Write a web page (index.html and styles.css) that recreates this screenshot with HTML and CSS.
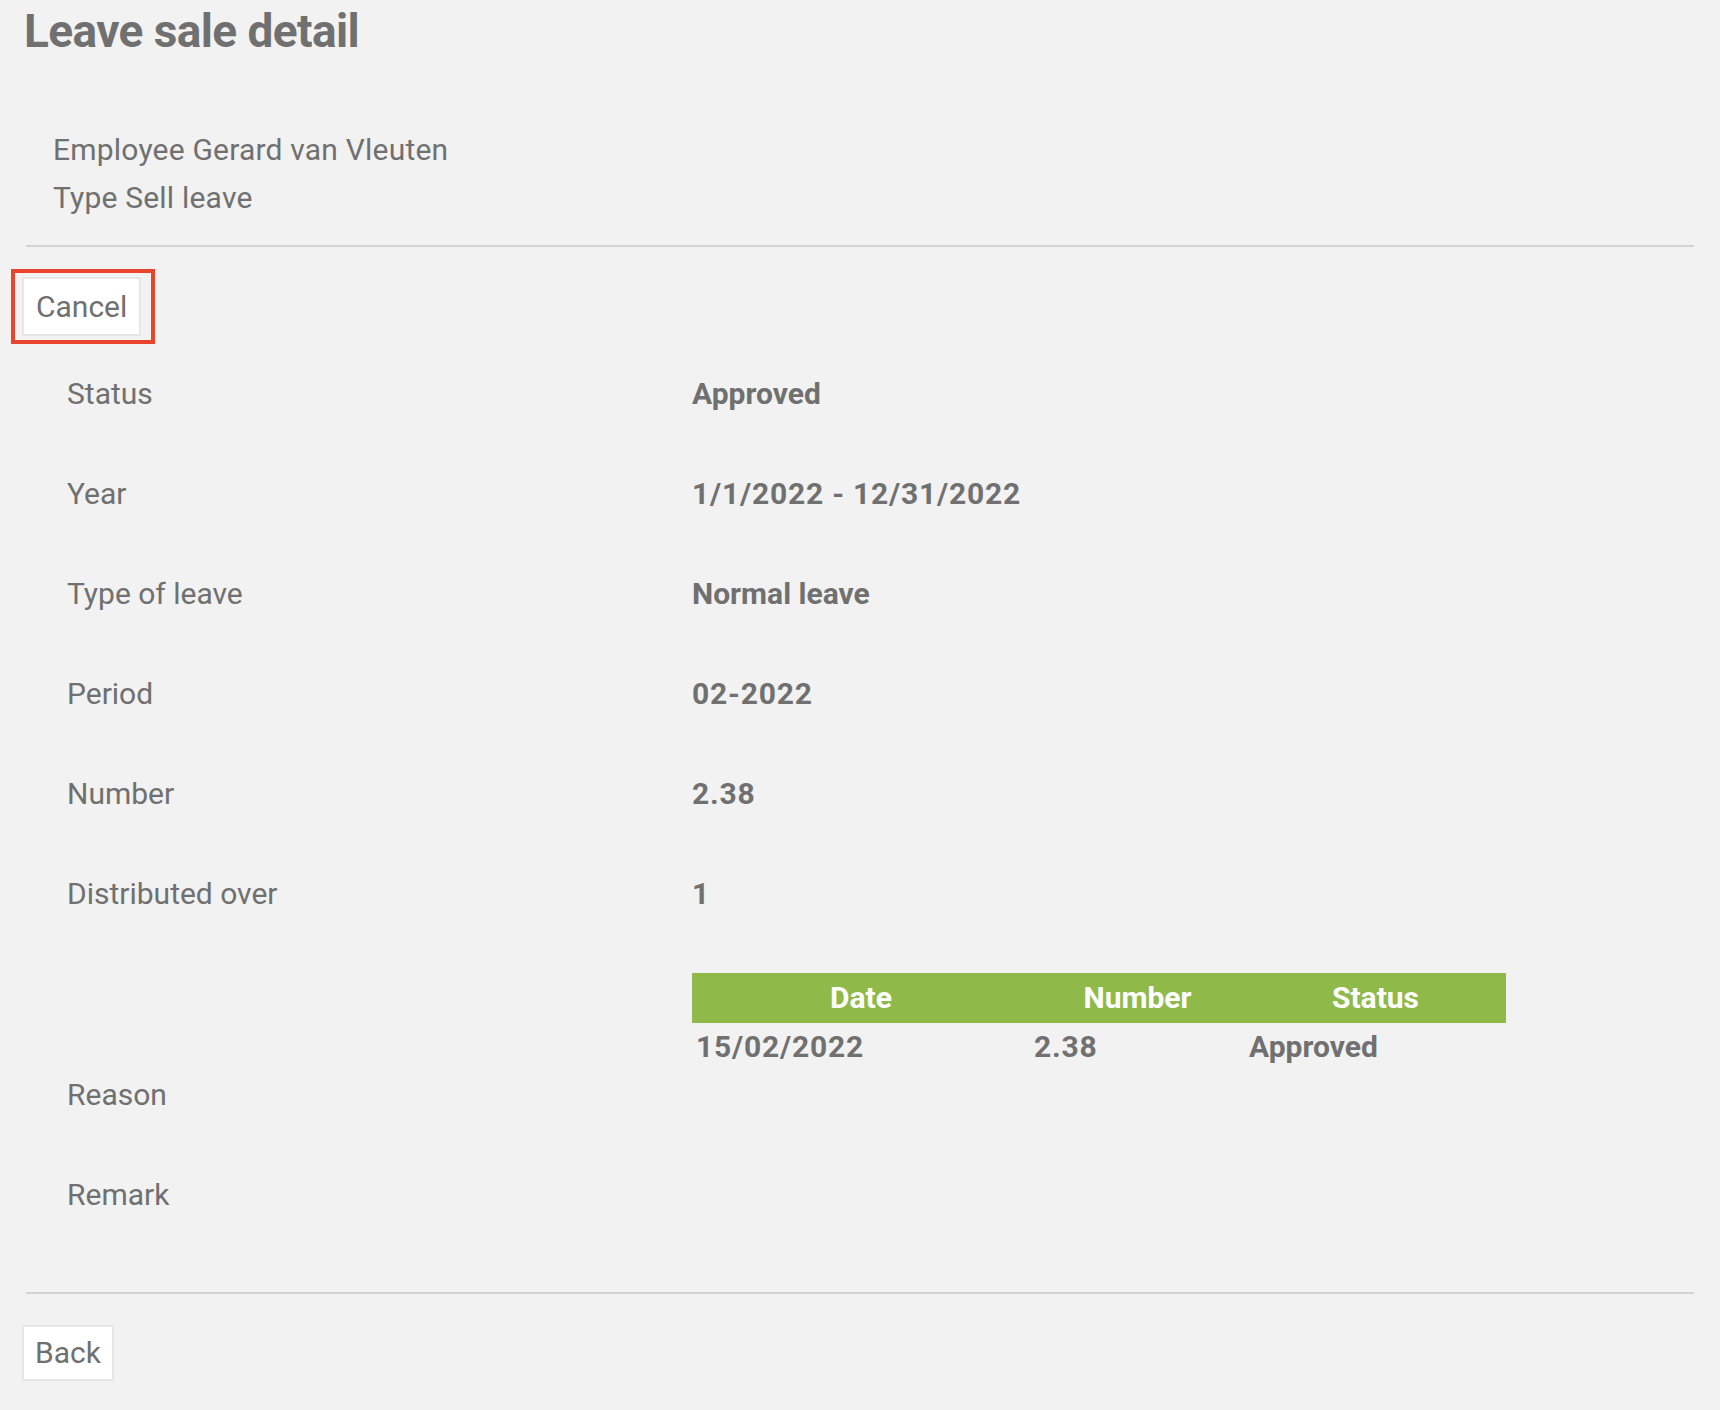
FILE: index.html
```html
<!DOCTYPE html>
<html lang="en">
<head>
    <meta charset="UTF-8">
    <meta name="viewport" content="width=device-width, initial-scale=1.0">
    <title>Leave sale detail</title>
    <link rel="stylesheet" href="styles.css">
</head>
<body>
    <div id="wrap">
        <h1 class="title">Leave sale detail</h1>

        <div class="info">
            <p>Employee Gerard van Vleuten</p>
            <p>Type Sell leave</p>
        </div>

        <hr class="line">

        <div class="highlight">
            <button class="btn" type="button">Cancel</button>
        </div>

        <div class="details">
            <div class="row">
                <div class="label">Status</div>
                <div class="value">Approved</div>
            </div>
            <div class="row">
                <div class="label">Year</div>
                <div class="value num">1/1/2022 - 12/31/2022</div>
            </div>
            <div class="row">
                <div class="label">Type of leave</div>
                <div class="value">Normal leave</div>
            </div>
            <div class="row">
                <div class="label">Period</div>
                <div class="value num">02-2022</div>
            </div>
            <div class="row">
                <div class="label">Number</div>
                <div class="value num">2.38</div>
            </div>
            <div class="row row-dist">
                <div class="label">Distributed over</div>
                <div class="value">
                    1
                    <table class="dist">
                        <thead>
                            <tr>
                                <th class="c-date">Date</th>
                                <th class="c-num">Number</th>
                                <th class="c-status">Status</th>
                            </tr>
                        </thead>
                        <tbody>
                            <tr>
                                <td class="num">15/02/2022</td>
                                <td class="num">2.38</td>
                                <td>Approved</td>
                            </tr>
                        </tbody>
                    </table>
                </div>
            </div>
            <div class="row row-reason">
                <div class="label">Reason</div>
                <div class="value"></div>
            </div>
            <div class="row">
                <div class="label">Remark</div>
                <div class="value"></div>
            </div>
        </div>

        <hr class="line line-bottom">

        <div class="footer">
            <button class="btn" type="button">Back</button>
        </div>
    </div>
</body>
</html>
```

FILE: styles.css
```css
* {
    margin: 0;
    padding: 0;
    box-sizing: border-box;
}

body {
    width: 100%;
    min-height: 100vh;
    background: #f2f2f2;
    color: #707070;
    font-family: Roboto, "Liberation Sans", sans-serif;
    font-size: 30px;
}

#wrap {
    width: 100%;
    padding-bottom: 28px;
}

.title {
    margin: 8px 0 0 24px;
    font-size: 46px;
    line-height: 46px;
    font-weight: 700;
    letter-spacing: -0.6px;
}

.info {
    margin-top: 72px;
    padding-left: 53px;
    line-height: 48px;
    letter-spacing: 0.2px;
}

.line {
    border: 0;
    height: 2px;
    background: #d3d3d3;
    margin: 23px 26px 0 26px;
}

.highlight {
    display: inline-block;
    margin: 22px 0 0 11px;
    padding: 4px 10px 4px 7px;
    border: 4px solid #e8452c;
}

.btn {
    display: block;
    background: #fff;
    border: 2px solid #e6e6e6;
    color: #707070;
    font-family: inherit;
    font-size: 30px;
    line-height: 55px;
    padding: 0 12px;
    cursor: pointer;
}

.details {
    padding-left: 67px;
}

.row {
    display: grid;
    grid-template-columns: 625px 1fr;
    padding: 30px 0;
    line-height: 40px;
}

.value {
    font-weight: 700;
}

.num {
    letter-spacing: 0.8px;
}

.row-dist {
    padding-bottom: 0;
}

.row-reason {
    padding-top: 4px;
}

.dist {
    width: 814px;
    margin-top: 59px;
    border-collapse: collapse;
}

.dist th {
    background: #8fba4a;
    color: #fff;
    font-weight: 700;
    height: 50px;
    text-align: center;
}

.dist td {
    height: 48px;
    padding-left: 4px;
    text-align: left;
}

.c-date {
    width: 338px;
}

.c-num {
    width: 215px;
}

.c-status {
    width: 261px;
}

.line-bottom {
    margin-top: 47px;
}

.footer {
    margin: 31px 0 0 22px;
}

.footer .btn {
    line-height: 52px;
    padding: 0 11px;
}
```
